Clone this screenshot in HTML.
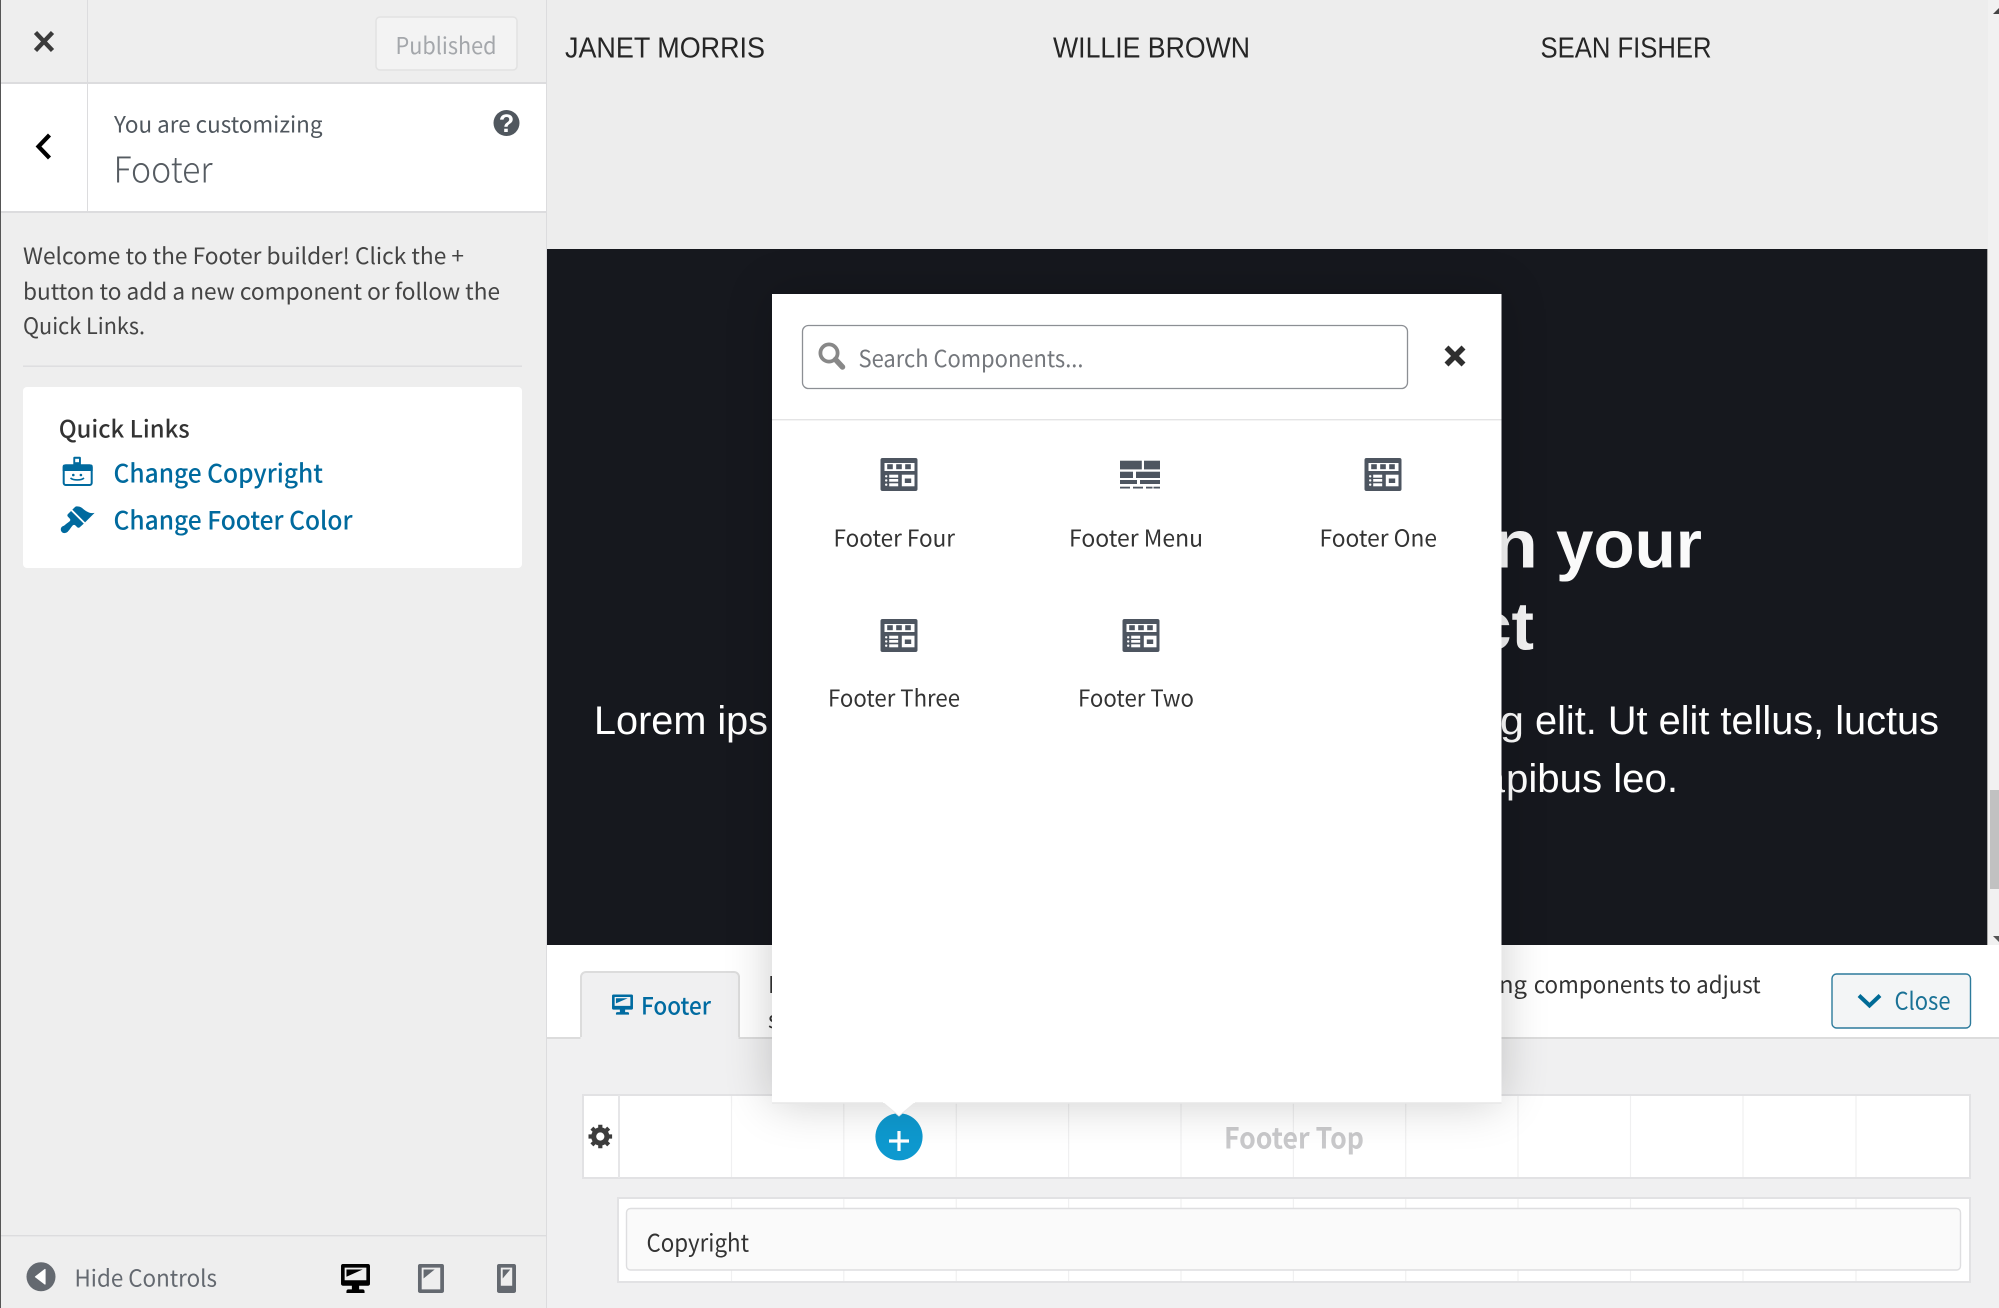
<!DOCTYPE html>
<html lang="en">
<head>
<meta charset="utf-8">
<title>Footer Builder</title>
<style>
html,body{margin:0;padding:0;background:#eee;width:1999px;height:1308px;overflow:hidden}
svg{display:block}
text{white-space:pre}
.s{font-family:"Noto Sans CJK JP","Liberation Sans",sans-serif}
.p{font-family:"Liberation Sans",sans-serif}
</style>
</head>
<body>
<svg xmlns="http://www.w3.org/2000/svg" width="1999" height="1308" viewBox="0 0 1999 1308">
<defs>
<filter id="sh" x="-20%" y="-20%" width="140%" height="140%"><feGaussianBlur stdDeviation="24"/></filter>
<symbol id="tbl" viewBox="0 0 37 33" overflow="visible">
<rect x="0" y="0" width="37" height="33" rx="2" fill="#4d5560"/>
<rect x="4" y="5" width="30" height="8" fill="#fff"/>
<rect x="6.7" y="6.2" width="5.6" height="5" fill="#4d5560"/>
<rect x="15.7" y="6.2" width="5.6" height="5" fill="#4d5560"/>
<rect x="24.7" y="6.2" width="5.6" height="5" fill="#4d5560"/>
<circle cx="5.7" cy="18.3" r="1.2" fill="#fff"/><circle cx="5.7" cy="22.4" r="1.2" fill="#fff"/><circle cx="5.7" cy="26.7" r="1.2" fill="#fff"/>
<rect x="8.7" y="16.7" width="9" height="3" fill="#fff"/><rect x="8.7" y="21" width="9" height="2.7" fill="#fff"/><rect x="8.7" y="25.3" width="9" height="3" fill="#fff"/>
<rect x="21.3" y="16.7" width="12.7" height="11.6" fill="#fff"/>
<rect x="24.3" y="20.5" width="6.4" height="4.5" fill="#4d5560"/>
</symbol>
</defs>

<!-- base -->
<rect width="1999" height="1308" fill="#eeeeee"/>

<!-- preview area -->
<rect x="547" y="0" width="1452" height="945" fill="#ededed"/>
<rect x="1988" y="0" width="11" height="945" fill="#f1f1f1"/>
<path d="M1999 8l-6 6h6z" fill="#444"/>
<path d="M1993 936h6v6z" fill="#555"/>
<rect x="1990" y="790" width="9" height="99" fill="#c1c1c1"/>

<text class="p" x="565" y="57.5" font-size="29" fill="#262626" textLength="200" lengthAdjust="spacingAndGlyphs">JANET MORRIS</text>
<text class="p" x="1053" y="57.5" font-size="29" fill="#262626" textLength="197" lengthAdjust="spacingAndGlyphs">WILLIE BROWN</text>
<text class="p" x="1540.5" y="57.5" font-size="29" fill="#262626" textLength="171" lengthAdjust="spacingAndGlyphs">SEAN FISHER</text>

<rect x="546.5" y="249" width="1440.5" height="696" fill="#16181e"/>
<rect x="1987" y="249" width="1" height="696" fill="#aaa"/>
<text class="p" x="1492" y="567.5" font-size="68" font-weight="700" fill="#fafafa" textLength="46" lengthAdjust="spacingAndGlyphs">n</text>
<text class="p" x="1556" y="567.5" font-size="68" font-weight="700" fill="#fafafa" textLength="146" lengthAdjust="spacingAndGlyphs">your</text>
<text class="p" x="1474" y="649.5" font-size="68" font-weight="700" fill="#f5f5f5" textLength="60" lengthAdjust="spacingAndGlyphs">ct</text>
<text class="p" x="594" y="734" font-size="40" fill="#fff" textLength="174" lengthAdjust="spacingAndGlyphs">Lorem ips</text>
<text class="p" x="1500" y="734" font-size="40" fill="#fff" textLength="24" lengthAdjust="spacingAndGlyphs">g</text>
<text class="p" x="1535" y="734" font-size="40" fill="#fff" textLength="404" lengthAdjust="spacingAndGlyphs">elit. Ut elit tellus, luctus</text>
<text class="p" x="1483" y="792" font-size="40" fill="#fff" textLength="22" lengthAdjust="spacingAndGlyphs">a</text>
<text class="p" x="1506" y="792" font-size="40" fill="#fff" textLength="172" lengthAdjust="spacingAndGlyphs">pibus leo.</text>

<!-- builder panel -->
<rect x="547" y="945" width="1452" height="93" fill="#ffffff"/>
<rect x="547" y="1037" width="1452" height="2" fill="#dcdcdc"/>
<rect x="547" y="1039" width="1452" height="269" fill="#f0f0f1"/>

<path d="M581 1038V977a5 5 0 0 1 5-5H734a5 5 0 0 1 5 5V1038" fill="#f0f0f1" stroke="#dcdcdc" stroke-width="2"/>
<rect x="580.5" y="1037" width="158" height="3" fill="#f0f0f1"/>
<path transform="translate(609.4 992) scale(1.31 1.26)" fill="#006ba1" d="M3 2h14c.55 0 1 .45 1 1v10c0 .55-.45 1-1 1h-5v2h2c.55 0 1 .45 1 1v1H5v-1c0-.55.45-1 1-1h2v-2H3c-.55 0-1-.45-1-1V3c0-.55.45-1 1-1zm13 9V4H4v7h12zM5 5h9L5 9V5z"/>
<text class="s" x="641" y="1014.7" font-size="24" font-weight="500" fill="#006ba1" textLength="70" lengthAdjust="spacingAndGlyphs">Footer</text>

<text class="s" x="768" y="993" font-size="23" fill="#333">I</text>
<text class="s" x="768" y="1028" font-size="23" fill="#333">s</text>
<text class="s" x="1499" y="993" font-size="23" fill="#333" textLength="28" lengthAdjust="spacingAndGlyphs">ng</text>
<text class="s" x="1533.7" y="993" font-size="23" fill="#333" textLength="227" lengthAdjust="spacingAndGlyphs">components to adjust</text>

<rect x="1832" y="974" width="138.5" height="54" rx="4.5" fill="#f3f5f6" stroke="#2c7a9b" stroke-width="1.4"/>
<path d="M1859 995.5l10.5 10 10.5-10" fill="none" stroke="#006b96" stroke-width="4"/>
<text class="s" x="1894.5" y="1009.7" font-size="24" fill="#1a7296" textLength="56" lengthAdjust="spacingAndGlyphs">Close</text>

<!-- Footer Top row -->
<rect x="583" y="1095" width="1387" height="83" fill="#fff" stroke="#e2e2e4" stroke-width="2"/>
<rect x="618" y="1095" width="2" height="83" fill="#e6e6e8"/>
<g stroke="#f0f0f1" stroke-width="1.2">
<path d="M731.5 1096v81M843.8 1096v81M956.3 1096v81M1068.6 1096v81M1181 1096v81M1293.4 1096v81M1405.7 1096v81M1518 1096v81M1630.5 1096v81M1743 1096v81M1856 1096v81"/>
</g>
<text class="s" x="1224" y="1148.5" font-size="29" font-weight="700" fill="#c9c9cb" textLength="140" lengthAdjust="spacingAndGlyphs">Footer Top</text>

<g transform="translate(600.3 1136.5)">
<circle r="6.6" fill="none" stroke="#3c3c3c" stroke-width="5"/>
<path stroke="#3c3c3c" stroke-width="4.2" fill="none" d="M0-11.8V-7M0 11.8V7M-11.8 0H-7M11.8 0H7M-8.4-8.4l3.6 3.6M8.4 8.4l-3.6-3.6M-8.4 8.4l3.6-3.6M8.4-8.4l-3.6 3.6"/>
</g>

<!-- Copyright row -->
<rect x="618" y="1198" width="1352" height="84" fill="#fff" stroke="#e2e2e4" stroke-width="2"/>
<g stroke="#f0f0f1" stroke-width="1.2">
<path d="M731.5 1199v82M843.8 1199v82M956.3 1199v82M1068.6 1199v82M1181 1199v82M1293.4 1199v82M1405.7 1199v82M1518 1199v82M1630.5 1199v82M1743 1199v82M1856 1199v82"/>
</g>
<rect x="626.5" y="1208.5" width="1334" height="61.5" rx="4" fill="#fafafa" stroke="#dedee0" stroke-width="1.4"/>
<text class="s" x="646.5" y="1251.5" font-size="24" fill="#333" textLength="102.5" lengthAdjust="spacingAndGlyphs">Copyright</text>

<!-- plus button -->
<circle cx="899" cy="1136.8" r="23.6" fill="#0e99cf"/>
<path d="M899 1131v20M889 1141h20" stroke="#fff" stroke-width="3.2" fill="none"/>

<!-- modal -->
<rect x="772" y="293" width="729" height="810" fill="#000" opacity=".2" filter="url(#sh)"/>
<path d="M883 1102.5L899 1116L915 1102.5z" fill="#fff" stroke="#e8e8e8" stroke-width="1"/>
<rect x="772" y="294" width="729.5" height="809" fill="#fff"/>
<path d="M772 1103h111M915 1103h586.5" stroke="#e7e7e7" stroke-width="1.4"/>
<rect x="802.5" y="325.5" width="605" height="63" rx="6" fill="#fff" stroke="#8c8f94" stroke-width="1.3"/>
<circle cx="829" cy="353" r="8.6" fill="none" stroke="#888" stroke-width="3.8"/>
<path d="M835.5 359.5L842.5 367" stroke="#888" stroke-width="5.5" stroke-linecap="round"/>
<text class="s" x="858.5" y="367" font-size="23" fill="#74777c" textLength="225" lengthAdjust="spacingAndGlyphs">Search Components...</text>
<path d="M1446.5 347.5l17 17M1463.5 347.5l-17 17" stroke="#2f2f2f" stroke-width="5.6" fill="none"/>
<rect x="772" y="419" width="729.5" height="1.4" fill="#e4e4e5"/>

<use href="#tbl" x="880.5" y="458" width="37" height="33"/>
<g transform="translate(1120 460.7)" fill="#4d5560">
<rect x="0" y="0" width="21.8" height="8.7"/><rect x="24" y="0" width="16" height="8.7"/>
<rect x="0" y="11" width="13" height="6.3"/><rect x="16" y="11" width="24" height="6.3"/>
<rect x="0" y="19.3" width="17" height="4"/><rect x="20" y="19.3" width="20" height="4"/>
<rect x="0" y="26" width="10" height="1.8"/><rect x="13" y="26" width="10" height="1.8"/><rect x="26" y="26" width="6.5" height="1.8"/><rect x="33.5" y="26" width="6.5" height="1.8"/>
</g>
<use href="#tbl" x="1364.5" y="458" width="37" height="33"/>
<use href="#tbl" x="880.5" y="619" width="37" height="33"/>
<use href="#tbl" x="1122.5" y="619" width="37" height="33"/>

<g class="s" font-size="23" fill="#333">
<text x="833.5" y="546.5" textLength="121.5" lengthAdjust="spacingAndGlyphs">Footer Four</text>
<text x="1069" y="546.5" textLength="134" lengthAdjust="spacingAndGlyphs">Footer Menu</text>
<text x="1319.5" y="546.5" textLength="117.5" lengthAdjust="spacingAndGlyphs">Footer One</text>
<text x="828" y="706.5" textLength="132" lengthAdjust="spacingAndGlyphs">Footer Three</text>
<text x="1078" y="706.5" textLength="116" lengthAdjust="spacingAndGlyphs">Footer Two</text>
</g>

<!-- sidebar -->
<rect x="0" y="0" width="546" height="1308" fill="#eeeeee"/>
<rect x="546" y="0" width="1" height="1308" fill="#dcdcde"/>
<rect x="0" y="0" width="1" height="1308" fill="#555"/>

<!-- sidebar header -->
<rect x="87" y="0" width="1" height="82" fill="#dcdcde"/>
<path d="M35.5 32.5l17 18M52.5 32.5l-17 18" stroke="#3a3a3a" stroke-width="4.4" fill="none"/>
<rect x="376" y="17" width="141" height="53" rx="4" fill="#f3f3f3" stroke="#e2e2e2" stroke-width="1.5"/>
<text class="s" x="395.5" y="54" font-size="23" fill="#a4a7ab" textLength="101" lengthAdjust="spacingAndGlyphs">Published</text>

<rect x="1" y="82" width="545" height="2" fill="#dcdcde"/>
<rect x="1" y="84" width="545" height="127" fill="#ffffff"/>
<rect x="1" y="211" width="545" height="2" fill="#dcdcde"/>
<rect x="87" y="84" width="1" height="127" fill="#dcdcde"/>
<path d="M49.5 135L38.5 146.5L49.5 158" stroke="#000" stroke-width="4.2" fill="none"/>
<text class="s" x="114" y="132.3" font-size="22.5" fill="#50575e" textLength="208.5" lengthAdjust="spacingAndGlyphs">You are customizing</text>
<text class="s" x="113.5" y="182.5" font-size="36" font-weight="300" fill="#555b61" textLength="99" lengthAdjust="spacingAndGlyphs">Footer</text>
<circle cx="506.5" cy="123" r="13" fill="#50575e"/>
<text class="p" x="506.5" y="132" font-size="25" font-weight="700" fill="#fff" text-anchor="middle">?</text>

<g class="s" font-size="22.5" fill="#444">
<text x="23" y="264" textLength="441" lengthAdjust="spacingAndGlyphs">Welcome to the Footer builder! Click the +</text>
<text x="23" y="299.3" textLength="477" lengthAdjust="spacingAndGlyphs">button to add a new component or follow the</text>
<text x="23" y="334" textLength="122" lengthAdjust="spacingAndGlyphs">Quick Links.</text>
</g>
<rect x="23" y="365.5" width="499" height="1.4" fill="#dcdcde"/>

<rect x="23" y="387" width="499" height="181" rx="4" fill="#fff"/>
<text class="s" x="58.7" y="437.5" font-size="24" font-weight="500" fill="#333" textLength="131" lengthAdjust="spacingAndGlyphs">Quick Links</text>
<text class="s" x="113.5" y="482.7" font-size="25" font-weight="500" fill="#006a9e" textLength="209.5" lengthAdjust="spacingAndGlyphs">Change Copyright</text>
<text class="s" x="113.5" y="529.7" font-size="25" font-weight="500" fill="#006a9e" textLength="239" lengthAdjust="spacingAndGlyphs">Change Footer Color</text>

<!-- id icon -->
<g fill="#006a9e">
<rect x="63.7" y="465.3" width="28" height="19.7" rx="2" fill="#fff" stroke="#006a9e" stroke-width="2"/>
<path d="M62.7 471V466.5a2 2 0 0 1 2-2H90.7a2 2 0 0 1 2 2V471z"/>
<rect x="73.3" y="456.7" width="7.6" height="9" rx="1.2" fill="#006a9e"/>
<rect x="75.2" y="458.8" width="3.8" height="3.4" fill="#fff"/>
<circle cx="73.3" cy="475" r="1.3"/><circle cx="80.9" cy="475" r="1.3"/>
<path d="M70.5 478c3 2.6 10.5 2.6 13.5 0" fill="none" stroke="#006a9e" stroke-width="1.6"/>
</g>
<!-- brush icon -->
<path transform="translate(59 502.5) scale(1.8)" fill="#006a9e" d="M14.48 11.06L7.41 3.99l1.5-1.5c.5-.56 2.3-.47 3.51.32 1.21.8 1.43 1.28 2.91 2.1 1.18.64 2.45 1.26 4.45.85zm-.71.71L6.7 4.7 4.93 6.47c-.39.39-.39 1.02 0 1.41l1.06 1.06c.39.39.39 1.03 0 1.42-.6.6-1.43 1.11-2.21 1.69-.35.26-.7.53-1.01.84C1.43 13.23 1 14.08 1 15c0 1.1.9 2 2 2 .92 0 1.77-.43 2.12-1.08.3-.31.58-.66.84-1.01.58-.78 1.09-1.61 1.69-2.21.39-.39 1.03-.39 1.42 0l1.06 1.06c.39.39 1.02.39 1.41 0z"/>

<!-- sidebar footer -->
<rect x="1" y="1235" width="545" height="1.4" fill="#dcdcde"/>
<circle cx="41" cy="1276.7" r="14.5" fill="#646970"/>
<path d="M45 1269.5v14.5l-9.5-7.2z" fill="#fff" stroke="#fff" stroke-width="1.2" stroke-linejoin="round"/>
<text class="s" x="74.5" y="1286.7" font-size="23" fill="#646970" textLength="142.5" lengthAdjust="spacingAndGlyphs">Hide Controls</text>
<path transform="translate(337.4 1260.4) scale(1.81)" fill="#000" d="M3 2h14c.55 0 1 .45 1 1v10c0 .55-.45 1-1 1h-5v2h2c.55 0 1 .45 1 1v1H5v-1c0-.55.45-1 1-1h2v-2H3c-.55 0-1-.45-1-1V3c0-.55.45-1 1-1zm13 9V4H4v7h12zM5 5h9L5 9V5z"/>
<path transform="translate(412.4 1260.4) scale(1.857 1.81)" fill="#646970" d="M4 2h12c.55 0 1 .45 1 1v14c0 .55-.45 1-1 1H4c-.55 0-1-.45-1-1V3c0-.55.45-1 1-1zm11 14V4H5v12h10zM6 5h6l-6 5V5z"/>
<path transform="translate(487.5 1260.4) scale(1.9 1.81)" fill="#646970" d="M6 2h8c.55 0 1 .45 1 1v14c0 .55-.45 1-1 1H6c-.55 0-1-.45-1-1V3c0-.55.45-1 1-1zm7 12V4H7v10h6zM8 5h4l-4 5V5z"/>
</svg>
</body>
</html>
